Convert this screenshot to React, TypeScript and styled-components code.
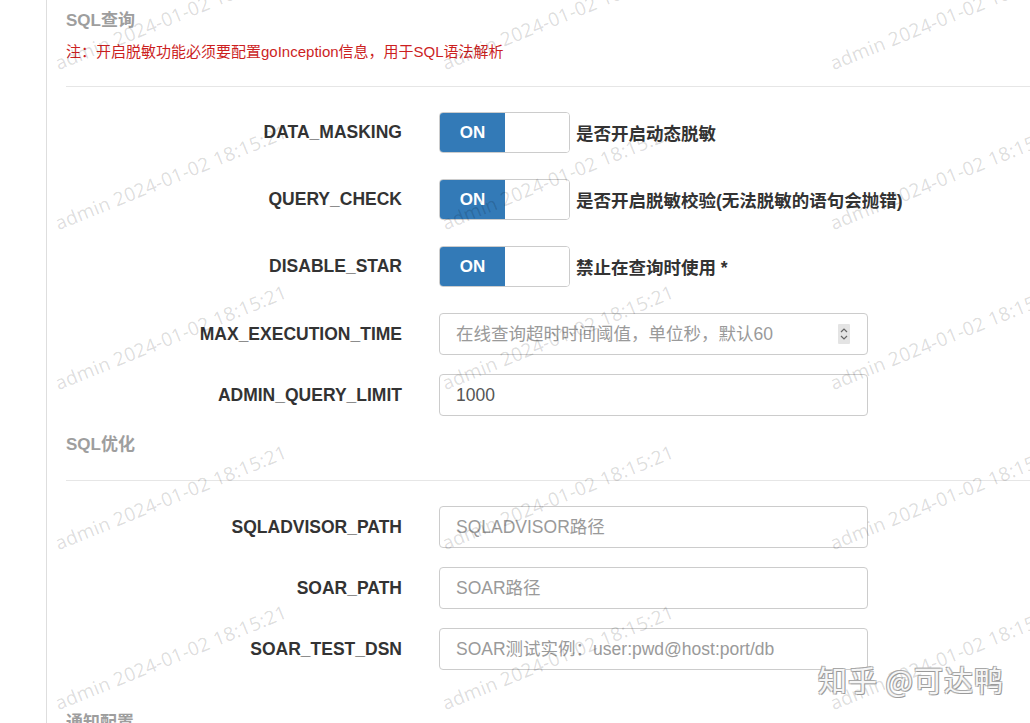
import styled, { createGlobalStyle } from "styled-components";

const GlobalStyle = createGlobalStyle`
  html, body {
    margin: 0;
    padding: 0;
    background: #fff;
  }
  body {
    font-family: "Liberation Sans", Arial, "Noto Sans CJK SC", sans-serif;
    color: #333;
    overflow: hidden;
  }
`;

type SwitchRow = { kind: "switch"; name: string; desc: string };
type InputRow = { kind: "input"; name: string; placeholder?: string; value?: string; number?: boolean };
type Row = SwitchRow | InputRow;

const queryRows: Row[] = [
    { kind: "switch", name: "DATA_MASKING", desc: "是否开启动态脱敏" },
    { kind: "switch", name: "QUERY_CHECK", desc: "是否开启脱敏校验(无法脱敏的语句会抛错)" },
    { kind: "switch", name: "DISABLE_STAR", desc: "禁止在查询时使用 *" },
    { kind: "input", name: "MAX_EXECUTION_TIME", placeholder: "在线查询超时时间阈值，单位秒，默认60", number: true },
    { kind: "input", name: "ADMIN_QUERY_LIMIT", value: "1000" },
];

const optimizeRows: Row[] = [
    { kind: "input", name: "SQLADVISOR_PATH", placeholder: "SQLADVISOR路径" },
    { kind: "input", name: "SOAR_PATH", placeholder: "SOAR路径" },
    { kind: "input", name: "SOAR_TEST_DSN", placeholder: "SOAR测试实例：user:pwd@host:port/db" },
];

const markCols = [60, 447, 835];
const markRows = [74, 234, 394, 554, 714];

const FormField = ({ row }: { row: Row }) => (
    <FormRow $tall={row.kind === "switch"}>
        <Label>{row.name}</Label>
        {row.kind === "switch" ? (
            <SwitchCell>
                <Switch>
                    <SwitchOn>ON</SwitchOn>
                    <SwitchOff />
                </Switch>
                <SwitchDesc>{row.desc}</SwitchDesc>
            </SwitchCell>
        ) : (
            <InputBox>
                <TextInput placeholder={row.placeholder} defaultValue={row.value} />
                {row.number && (
                    <Spinner width="12" height="20" viewBox="0 0 12 20">
                        <rect x="0" y="0" width="12" height="20" rx="1" fill="#e4e4e4" />
                        <path d="M3 8 L6 5 L9 8" fill="none" stroke="#666" strokeWidth="1.2" />
                        <path d="M3 12 L6 15 L9 12" fill="none" stroke="#666" strokeWidth="1.2" />
                    </Spinner>
                )}
            </InputBox>
        )}
    </FormRow>
);

export default function App() {
    return (
        <Page>
            <GlobalStyle />
            <Panel>
                <SectionTitle $top={11}>SQL查询</SectionTitle>
                <Note>注：开启脱敏功能必须要配置goInception信息，用于SQL语法解析</Note>
                <Divider />
                {queryRows.map((r) => (
                    <FormField key={r.name} row={r} />
                ))}
                <SectionTitle $top={0}>SQL优化</SectionTitle>
                <Divider />
                {optimizeRows.map((r) => (
                    <FormField key={r.name} row={r} />
                ))}
                <SectionTitle $top={24}>通知配置</SectionTitle>
            </Panel>

            <MarkLayer>
                {markRows.map((y) =>
                    markCols.map((x) => (
                        <Mark key={`${x}-${y}`} style={{ left: x, top: y - 22 }}>
                            admin 2024-01-02 18:15:21
                        </Mark>
                    ))
                )}
            </MarkLayer>
            <Zhihu>知乎 @可达鸭</Zhihu>
        </Page>
    );
}

const Page = styled.div`
    position: relative;
    width: 1030px;
    height: 723px;
    overflow: hidden;
    background: #fff;
`

const Panel = styled.div`
    display: flex;
    flex-direction: column;
    height: 100%;
    box-sizing: border-box;
    margin-left: 46px;
    border-left: 1px solid #dedede;
    padding-left: 19px;
`

const SectionTitle = styled.h4<{ $top: number }>`
    margin: ${(p) => p.$top}px 0 0;
    font-size: 17px;
    line-height: 20px;
    font-weight: bold;
    color: #9e9e9e;
`

const Note = styled.div`
    margin-top: 12px;
    font-size: 15px;
    line-height: 18px;
    color: #cc1f1f;
`

const Divider = styled.hr`
    width: 100%;
    margin: 25px 0;
    border: 0;
    border-top: 1px solid #e6e6e6;
`

const FormRow = styled.div<{ $tall: boolean }>`
    display: grid;
    grid-template-columns: 336px 429px;
    column-gap: 37px;
    align-items: center;
    margin-bottom: ${(p) => (p.$tall ? 26 : 19)}px;
`

const Label = styled.label`
    text-align: right;
    font-size: 17.5px;
    font-weight: bold;
    color: #333;
`

const SwitchCell = styled.div`
    display: flex;
    align-items: center;
    white-space: nowrap;
`

const Switch = styled.div`
    display: flex;
    flex-shrink: 0;
    width: 131px;
    height: 41px;
    box-sizing: border-box;
    border: 1px solid #ccc;
    border-radius: 4px;
    overflow: hidden;
`

const SwitchOn = styled.span`
    display: flex;
    align-items: center;
    justify-content: center;
    width: 65px;
    background: #337ab7;
    color: #fff;
    font-size: 17px;
    font-weight: bold;
`

const SwitchOff = styled.span`
    flex: 1;
    background: #fff;
`

const SwitchDesc = styled.span`
    margin-left: 6px;
    font-size: 17.5px;
    font-weight: bold;
    color: #333;
`

const InputBox = styled.div`
    display: flex;
    align-items: center;
    height: 42px;
    box-sizing: border-box;
    border: 1px solid #ccc;
    border-radius: 4px;
    padding: 0 17px 0 16px;
    background: #fff;
`

const TextInput = styled.input`
    flex: 1;
    min-width: 0;
    border: 0;
    outline: 0;
    padding: 0;
    background: transparent;
    font-family: "Liberation Sans", Arial, "Noto Sans CJK SC", sans-serif;
    font-size: 17.5px;
    color: #555;

    &::placeholder {
        color: #9a9a9a;
    }
`

const Spinner = styled.svg`
    flex-shrink: 0;
`

const MarkLayer = styled.div`
    position: absolute;
    inset: 0;
    pointer-events: none;
`

const Mark = styled.span`
    position: absolute;
    white-space: nowrap;
    font-family: "Open Sans", "Noto Sans", sans-serif;
    font-size: 19px;
    line-height: 22px;
    letter-spacing: 0.3px;
    color: rgba(0, 0, 0, 0.14);
    transform-origin: left bottom;
    transform: rotate(-22deg);
`

const Zhihu = styled.div`
    position: absolute;
    right: 26px;
    top: 660px;
    font-family: "Noto Sans CJK SC", sans-serif;
    font-size: 29px;
    line-height: 38px;
    letter-spacing: 1px;
    color: #f6f6f6;
    text-shadow: -1px -1px 0 #a8a8a8, 1px 1px 0 #9a9a9a, 1px -1px 0 #c0c0c0, -1px 1px 0 #c0c0c0;
    pointer-events: none;
`
